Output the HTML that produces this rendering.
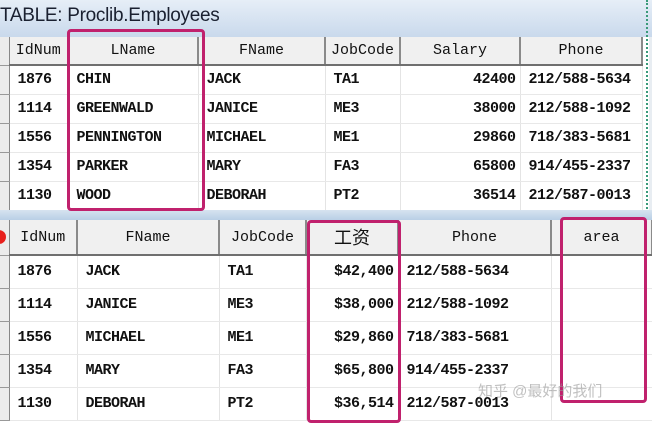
<!DOCTYPE html>
<html><head><meta charset="utf-8"><style>
*{margin:0;padding:0;box-sizing:border-box}
body{width:652px;height:420px;overflow:hidden;background:#fff;position:relative;font-family:"Liberation Mono","Noto Sans CJK SC",monospace}
.title{position:absolute;left:0;top:0;width:652px;height:37px;background:linear-gradient(#e6eef7,#c9d9ec);font-family:"Liberation Sans",sans-serif;font-size:19px;color:#1a2030;padding:5px 0 0 0;letter-spacing:-0.3px}
table{position:absolute;border-collapse:collapse;table-layout:fixed}
td{border-right:1px solid #e4e4e4;border-bottom:1px solid #e8e8e8;white-space:nowrap;overflow:hidden;color:#111;font-weight:bold;font-size:15px;padding-left:8px;letter-spacing:-0.5px}
th{background:#f0f0f0;border-right:2px solid #8a8a8a;border-bottom:2px solid #6f6f6f;font-weight:normal;font-size:15px;color:#111;white-space:nowrap}
td.g,th.g{background:#ececec;border-right:1px solid #888;border-bottom:1px solid #999;padding:0}
td.r{text-align:right;padding-right:4px}
.box{position:absolute;border:3px solid #c0216d;border-radius:4px}
</style></head><body>
<div class="title">TABLE: Proclib.Employees</div>
<div style="position:absolute;left:0;top:37px;width:652px;height:173px;background:#fff"></div>
<table style="left:0;top:37px;width:642px">
<colgroup><col style="width:9px"><col style="width:59px"><col style="width:130px"><col style="width:127px"><col style="width:75px"><col style="width:120px"><col style="width:122px"></colgroup>
<tr style="height:28px"><th class="g"></th><th>IdNum</th><th>LName</th><th>FName</th><th>JobCode</th><th>Salary</th><th>Phone</th></tr>
<tr style="height:29px"><td class="g"></td><td>1876</td><td>CHIN</td><td>JACK</td><td>TA1</td><td class="r">42400</td><td>212/588-5634</td></tr>
<tr style="height:29px"><td class="g"></td><td>1114</td><td>GREENWALD</td><td>JANICE</td><td>ME3</td><td class="r">38000</td><td>212/588-1092</td></tr>
<tr style="height:29px"><td class="g"></td><td>1556</td><td>PENNINGTON</td><td>MICHAEL</td><td>ME1</td><td class="r">29860</td><td>718/383-5681</td></tr>
<tr style="height:29px"><td class="g"></td><td>1354</td><td>PARKER</td><td>MARY</td><td>FA3</td><td class="r">65800</td><td>914/455-2337</td></tr>
<tr style="height:29px"><td class="g"></td><td>1130</td><td>WOOD</td><td>DEBORAH</td><td>PT2</td><td class="r">36514</td><td>212/587-0013</td></tr>
</table>
<div style="position:absolute;left:646px;top:0;width:3px;height:212px;border-left:2px dotted #3a9a7a"></div>
<div style="position:absolute;left:649px;top:37px;width:3px;height:175px;background:#e8edf2"></div>
<div style="position:absolute;left:0;top:210px;width:652px;height:10px;background:linear-gradient(#d6e3f0,#b9cfe6)"></div>
<table style="left:0;top:220px;width:652px">
<colgroup><col style="width:9px"><col style="width:68px"><col style="width:142px"><col style="width:87px"><col style="width:92px"><col style="width:153px"><col style="width:101px"></colgroup>
<tr style="height:35px"><th class="g" style="position:relative"><div style="position:absolute;left:-8px;top:10px;width:14px;height:14px;border-radius:50%;background:#e8201c"></div></th><th>IdNum</th><th>FName</th><th>JobCode</th><th style="font-size:18px">工资</th><th>Phone</th><th>area</th></tr>
<tr style="height:33px"><td class="g"></td><td>1876</td><td>JACK</td><td>TA1</td><td class="r">$42,400</td><td>212/588-5634</td><td></td></tr>
<tr style="height:33px"><td class="g"></td><td>1114</td><td>JANICE</td><td>ME3</td><td class="r">$38,000</td><td>212/588-1092</td><td></td></tr>
<tr style="height:33px"><td class="g"></td><td>1556</td><td>MICHAEL</td><td>ME1</td><td class="r">$29,860</td><td>718/383-5681</td><td></td></tr>
<tr style="height:33px"><td class="g"></td><td>1354</td><td>MARY</td><td>FA3</td><td class="r">$65,800</td><td>914/455-2337</td><td></td></tr>
<tr style="height:33px"><td class="g"></td><td>1130</td><td>DEBORAH</td><td>PT2</td><td class="r">$36,514</td><td>212/587-0013</td><td></td></tr>
</table>
<div class="box" style="left:67px;top:29px;width:138px;height:182px"></div>
<div class="box" style="left:307px;top:220px;width:94px;height:203px"></div>
<div class="box" style="left:560px;top:217px;width:87px;height:186px"></div>
<div style="position:absolute;left:478px;top:380px;font-family:'Liberation Sans','Noto Sans CJK SC',sans-serif;font-size:15px;color:rgba(150,150,150,0.6)">知乎 @最好的我们</div>
</body></html>
